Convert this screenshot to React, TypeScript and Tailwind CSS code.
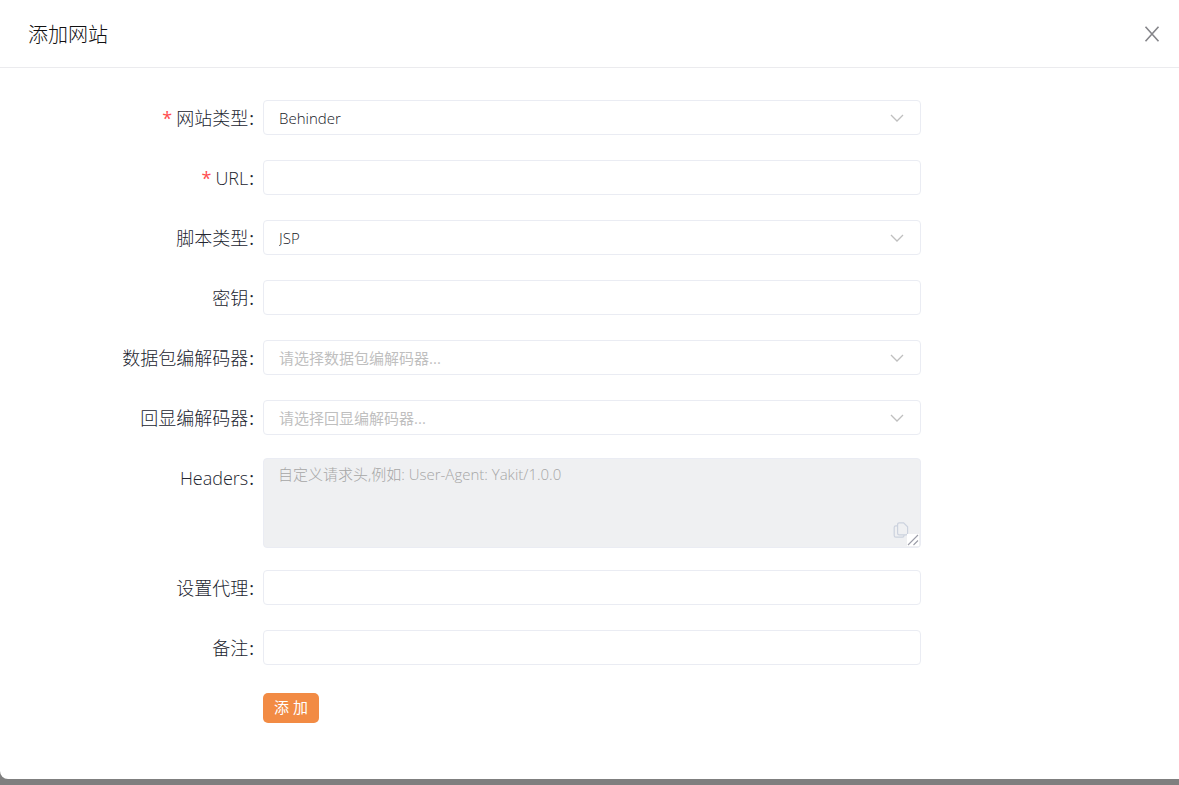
import type { ReactNode } from 'react'

const control = `block w-full h-[35px] px-[15px] pt-0.5 rounded-sm border border-[#eaecf3] bg-white text-[15px] outline-none focus:border-[#f28b44]`;

function Label({ htmlFor, text, required = false }: { htmlFor: string, text: string, required?: boolean }) {
    return (
        <label htmlFor={htmlFor} className="col-span-5 flex h-10 items-center justify-end pr-[9px] text-lg text-[#22252f]">
            {required && <span className="mr-1 font-normal text-[#ff4d4f]">*</span>}
            <span>{text}</span>
            <span className="ml-px font-normal">:</span>
        </label>
    )
}

function Row({ id, label, required = false, children }: { id: string, label: string, required?: boolean, children: ReactNode }) {
    return (
        <div className="grid grid-cols-24 items-start">
            <Label htmlFor={id} text={label} required={required} />
            <div className="col-span-14 pt-0.5 pb-[3px]">{children}</div>
        </div>
    )
}

function Select({ id, options, placeholder }: { id: string, options: string[], placeholder?: string }) {
    return (
        <div className="relative">
            <select id={id} defaultValue={placeholder ? '' : options[0]} className={`${control} appearance-none ${placeholder ? 'font-normal text-[#bfbfbf]' : 'text-[#16181f]'}`}>
                {placeholder && <option value="">{placeholder}</option>}
                {options.map(o => <option key={o} value={o}>{o}</option>)}
            </select>
            <svg className="pointer-events-none absolute top-3 right-4 h-3 w-4" viewBox="0 0 16 12" fill="none" stroke="#bfbfbf" strokeWidth="1.3">
                <path d="M2 3l6 6 6-6" />
            </svg>
        </div>
    )
}

export default function App() {
    return (
        <div className="min-h-screen bg-[#7f7f7f] font-['Open_Sans','Noto_Sans_CJK_SC',sans-serif] font-light">
            <div className="rounded-bl-lg bg-white pb-14">
                {/* Header */}
                <header className="flex h-[68px] items-center justify-between border-b border-[#ebebee] pr-[19px] pl-7">
                    <h1 className="pt-0.5 text-xl font-light text-[#111111]">添加网站</h1>
                    <button type="button" aria-label="Close" className="cursor-pointer">
                        <svg className="h-4 w-4" viewBox="0 0 16 16" fill="none" stroke="#85858a" strokeWidth="1.6">
                            <path d="M1.5 0.8l13 14.4M14.5 0.8l-13 14.4" />
                        </svg>
                    </button>
                </header>

                {/* Form */}
                <form className="flex flex-col gap-5 pt-[30px] pr-[23px] pl-7" onSubmit={e => e.preventDefault()}>
                    <Row id="shellType" label="网站类型" required>
                        <Select id="shellType" options={['Behinder', 'Godzilla']} />
                    </Row>
                    <Row id="url" label="URL" required>
                        <input id="url" type="text" className={control} />
                    </Row>
                    <Row id="script" label="脚本类型">
                        <Select id="script" options={['JSP', 'JSPX', 'PHP', 'ASP', 'ASPX']} />
                    </Row>
                    <Row id="secret" label="密钥">
                        <input id="secret" type="text" className={control} />
                    </Row>
                    <Row id="packet" label="数据包编解码器">
                        <Select id="packet" options={[]} placeholder="请选择数据包编解码器..." />
                    </Row>
                    <Row id="payload" label="回显编解码器">
                        <Select id="payload" options={[]} placeholder="请选择回显编解码器..." />
                    </Row>
                    <div className="grid grid-cols-24 items-start">
                        <Label htmlFor="headers" text="Headers" />
                        <div className="relative col-span-14">
                            <textarea
                                id="headers"
                                placeholder="自定义请求头,例如: User-Agent: Yakit/1.0.0"
                                className="block h-[90px] w-full resize-y rounded-sm border border-[#eaecf3] bg-[#eff0f2] px-3.5 py-1 text-[15px] text-[#31343f] outline-none placeholder:text-[#a6a6a6]"
                            />
                            <button type="button" aria-label="Copy" className="absolute right-3 bottom-2.5 cursor-pointer">
                                <svg className="h-4 w-4" viewBox="0 0 16 16" fill="none" stroke="#ccd2de" strokeWidth="1.2">
                                    <path d="M6.2 .8h4.4l4 4v6.5a1.6 1.6 0 0 1-1.6 1.6H6.2a1.6 1.6 0 0 1-1.6-1.6V2.4A1.6 1.6 0 0 1 6.2 .8z" />
                                    <path d="M4.6 3.8H2.8a1.6 1.6 0 0 0-1.6 1.6v8.2a1.6 1.6 0 0 0 1.6 1.6h6.6a1.6 1.6 0 0 0 1.6-1.6v-.7" />
                                </svg>
                            </button>
                            {/* resize grip */}
                            <svg className="pointer-events-none absolute right-0.5 bottom-0.5 h-3 w-3 bg-white" viewBox="0 0 12 12" fill="none" stroke="#9c9da8" strokeWidth="1.1">
                                <path d="M1 11L11 1M6.5 11L11 6.5" />
                            </svg>
                        </div>
                    </div>
                    <Row id="proxy" label="设置代理">
                        <input id="proxy" type="text" className={control} />
                    </Row>
                    <Row id="note" label="备注">
                        <input id="note" type="text" className={control} />
                    </Row>
                    <div className="grid grid-cols-24 pt-[5px]">
                        <div className="col-span-14 col-start-6">
                            <button type="submit" className="block h-[30px] w-14 cursor-pointer rounded-[5px] bg-[#f28b44] pb-0.5 text-[15px] font-normal text-white">添 加</button>
                        </div>
                    </div>
                </form>
            </div>
        </div>
    )
}
